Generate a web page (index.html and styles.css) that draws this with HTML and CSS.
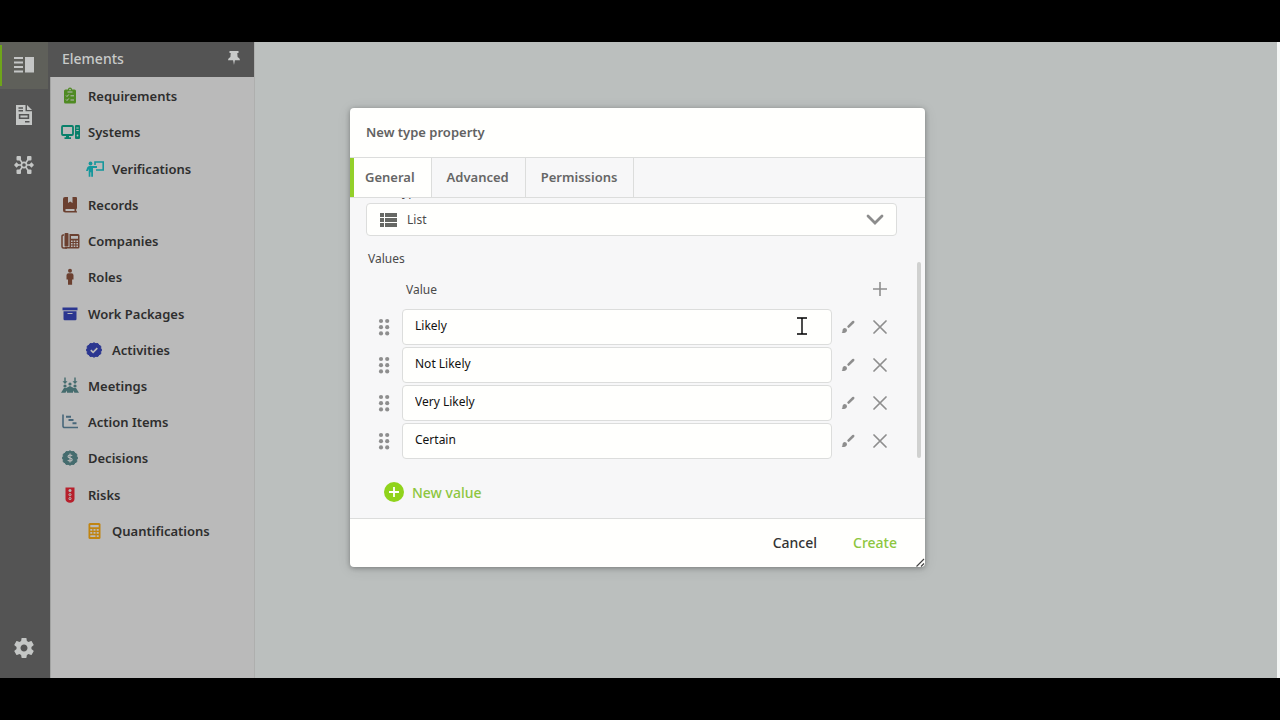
FILE: index.html
```html
<!DOCTYPE html>
<html lang="en">
<head>
    <meta charset="UTF-8">
    <meta name="viewport" content="width=device-width, initial-scale=1.0">
    <title>New type property</title>
    <link rel="stylesheet" href="styles.css">
</head>
<body>
<!-- Shared icons -->
<svg class="icon-defs" aria-hidden="true">
    <symbol id="icon-brush" viewBox="0 0 14 14">
        <path d="M12.2 2 7.500 6.700" stroke="currentColor" stroke-width="2.500" stroke-linecap="round"/>
        <path d="M3.800 8a2.400 2.400 0 0 1 2.200 2.600c-.2 1.600-1.600 2.400-3 2.400C2 13 1.200 12.900.6 12.500c.7-.4.9-1 .9-2C1.600 9 2.400 8 3.800 8z"/>
        <path d="M4.800 6.300 8 9.500" stroke="#f7f7f7" stroke-width=".8"/>
    </symbol>
    <symbol id="icon-close" viewBox="0 0 14 14">
        <path d="M1 1l12 12M13 1L1 13" fill="none" stroke="currentColor" stroke-width="1.700" stroke-linecap="round"/>
    </symbol>
    <symbol id="icon-drag" viewBox="0 0 12 18">
        <circle cx="3" cy="3" r="2.100"/><circle cx="9.200" cy="3" r="2.100"/>
        <circle cx="3" cy="9.200" r="2.100"/><circle cx="9.200" cy="9.200" r="2.100"/>
        <circle cx="3" cy="15.400" r="2.100"/><circle cx="9.200" cy="15.400" r="2.100"/>
    </symbol>
    <symbol id="icon-seal" viewBox="0 0 20 20">
        <path d="M10 2.800l1.900.9 2-.2 1.100 1.700 1.800 1-.1 2 .9 1.800-.9 1.800.1 2-1.800 1-1.100 1.700-2-.2-1.900.9-1.900-.9-2 .2L5 14.800l-1.800-1 .1-2-.9-1.800.9-1.800-.1-2 1.800-1 1.100-1.700 2 .2z" stroke="currentColor" stroke-linejoin="round"/>
    </symbol>
</svg>

<div class="app">
    <nav class="rail" aria-label="Main">
        <button class="rail-item active" aria-label="Elements">
            <svg width="20" height="16" viewBox="0 0 20 16"><path d="M0 0h9v2H0zM0 4.500h9v2H0zM0 9h9v2H0zM0 13.500h9v2H0zM11 0h9v15.500h-9z"/></svg>
        </button>
        <button class="rail-item" aria-label="Documents">
            <svg width="16" height="20" viewBox="0 0 16 20"><path fill-rule="evenodd" d="M0 0h9.500v6.200H16V20H0zM2.500 2.300v1.400H7V2.300zM2.500 5v1.400H7V5zM2.800 9v5h10.400V9zM4.400 10.500h7.200v2H4.400zM9 16v1.400h4.500V16z"/><path d="M11 0l5 5h-5z"/></svg>
        </button>
        <button class="rail-item" aria-label="Relations">
            <svg width="20" height="20" viewBox="0 0 20 20"><path d="M5 3l3.200 5M15 3l-3.200 5M5 17l3.200-5M15 17l-3.200-5M3 10h4M13 10h4" stroke="currentColor" stroke-width="1.500"/><circle cx="10" cy="10" r="2.600" fill="none" stroke="currentColor" stroke-width="1.600"/><rect x="2.500" y="1" width="4.500" height="4.500" rx="1"/><rect x="13" y="1" width="4.500" height="4.500" rx="1"/><rect x="2.500" y="14.500" width="4.500" height="4.500" rx="1"/><rect x="13" y="14.500" width="4.500" height="4.500" rx="1"/><path d="M2.500 7.300 5.200 10l-2.700 2.700L0 10zM17.500 7.300 20 10l-2.500 2.700L14.800 10z"/></svg>
        </button>
        <button class="rail-item rail-settings" aria-label="Settings">
            <svg width="24" height="24" viewBox="0 0 24 24"><path d="M19.430 12.980c.04-.32.070-.64.070-.98s-.03-.66-.07-.98l2.110-1.650c.19-.15.240-.42.120-.64l-2-3.460c-.12-.22-.39-.3-.61-.22l-2.490 1c-.52-.4-1.080-.73-1.690-.98l-.38-2.650C14.460 2.180 14.250 2 14 2h-4c-.25 0-.46.180-.49.420l-.38 2.650c-.61.250-1.170.590-1.690.980l-2.490-1c-.23-.09-.49 0-.61.220l-2 3.460c-.13.220-.07.490.12.640l2.110 1.650c-.04.320-.07.650-.07.980s.03.660.070.980l-2.110 1.650c-.19.150-.24.420-.12.640l2 3.460c.12.220.390.300.610.220l2.490-1c.52.400 1.080.730 1.690.980l.38 2.650c.03.240.240.420.490.420h4c.25 0 .46-.18.490-.42l.38-2.650c.61-.25 1.170-.59 1.690-.98l2.490 1c.23.090.490 0 .610-.22l2-3.460c.12-.22.070-.49-.12-.64l-2.110-1.650zM12 15.500c-1.930 0-3.500-1.570-3.500-3.500s1.570-3.500 3.500-3.500 3.500 1.570 3.500 3.500-1.570 3.500-3.500 3.500z"/></svg>
        </button>
    </nav>

    <aside class="panel">
        <header class="panel-header">
            <h2>Elements</h2>
            <button class="pin" aria-label="Unpin panel">
                <svg width="12" height="14" viewBox="0 0 12 14"><path d="M1.500 0h9v2H9.300l.3 4c1.400.8 2.200 1.800 2.400 3.200H6.900L6 14l-.9-4.800H0C.2 7.800 1 6.800 2.400 6l.3-4H1.500z"/></svg>
            </button>
        </header>
        <div class="panel-content">
            <div class="element-list">
                <a href="#" class="element green">
                    <svg viewBox="0 0 20 20"><path d="M5.500 3.500H8a2 2 0 0 1 4 0h2.500A1.500 1.500 0 0 1 16 5v11a1.500 1.500 0 0 1-1.500 1.500h-9A1.500 1.500 0 0 1 4 16V5a1.500 1.500 0 0 1 1.500-1.500z"/><circle class="cut" cx="10" cy="3.600" r=".8"/><path class="cut-line" d="M7.500 6h5M6 9.500l1 1 1.800-2M10.500 9.800H14M6 13.500l1 1 1.800-2M10.500 14H14"/></svg>
                    Requirements
                </a>
                <a href="#" class="element teal">
                    <svg viewBox="0 0 20 20"><rect x="2" y="4" width="11" height="9" rx="1" fill="none" stroke="currentColor" stroke-width="1.800"/><path d="M6 13h3v3H6zM4.500 15.200h6.500V17H4.500z"/><rect x="15" y="3" width="5" height="14" rx="1"/><path class="cut-line" d="M16.300 6h2.400M16.300 8.500h2.400"/><circle class="cut" cx="17.500" cy="13.500" r=".9"/></svg>
                    Systems
                </a>
                <a href="#" class="element child cyan">
                    <svg viewBox="0 0 20 20"><circle cx="6.500" cy="4.500" r="1.900"/><path d="M5.500 7H13v2H9v8.800H7.200v-4.500h-.8v4.500H4.700V10L3.800 12H2l1.200-3.500Q3.800 7 5.500 7z"/><path d="M11 6V3h8.200v8H12" fill="none" stroke="currentColor" stroke-width="1.600"/></svg>
                    Verifications
                </a>
                <a href="#" class="element brown">
                    <svg viewBox="0 0 20 20"><path fill-rule="evenodd" d="M5 2h3v6l2.200-1.600L12.500 8V2H16a1 1 0 0 1 1 1v10.500l-.8.500v2.200h.8V17.500H5.500A2.500 2.500 0 0 1 3 15V4a2 2 0 0 1 2-2zM5.500 14v2h9v-2z"/></svg>
                    Records
                </a>
                <a href="#" class="element brown">
                    <svg viewBox="0 0 20 20"><path d="M4 4H3.200A1.200 1.200 0 0 0 2 5.200V15.500A1.500 1.500 0 0 0 3.500 17H7" fill="none" stroke="currentColor" stroke-width="1.500"/><rect x="4.500" y="2" width="4" height="13.500" rx="1"/><path d="M9.500 3H18a1.500 1.500 0 0 1 1.500 1.500V16a1.500 1.500 0 0 1-1.500 1.500H5V16h4.500z"/><path class="cut" d="M11 5h7v2.800h-7zM11 9.500h1.600V11H11zM13.700 9.500h1.600V11h-1.600zM16.400 9.500H18V11h-1.600zM11 12h1.600v1.500H11zM13.700 12h1.600v1.500h-1.600zM16.400 12H18v1.500h-1.600zM11 14.500h1.600V16H11zM13.700 14.500h1.600V16h-1.600zM16.400 14.500H18V16h-1.600z"/></svg>
                    Companies
                </a>
                <a href="#" class="element brown">
                    <svg viewBox="0 0 20 20"><circle cx="10" cy="3.700" r="2"/><path d="M8.500 6.200h3a2 2 0 0 1 2 2v4.300h-1.400v5.300H8v-5.300H6.500V8.200a2 2 0 0 1 2-2z"/></svg>
                    Roles
                </a>
                <a href="#" class="element blue">
                    <svg viewBox="0 0 20 20"><path d="M2.500 3.500h15v2.800h-15z"/><path d="M3.500 7.200h13V15a1.200 1.200 0 0 1-1.200 1.200H4.700A1.200 1.200 0 0 1 3.500 15z"/><path class="cut-line" d="M7.500 9.500h5"/></svg>
                    Work Packages
                </a>
                <a href="#" class="element child blue">
                    <svg viewBox="0 0 20 20"><use href="#icon-seal"/><path d="M6.800 10.200l2.300 2.200 4.200-4.300" fill="none" stroke="#bababa" stroke-width="1.600"/></svg>
                    Activities
                </a>
                <a href="#" class="element slate">
                    <svg viewBox="0 0 20 20"><path d="M4.300 1.500h1.400v3.700h1.800L5 8 2.500 5.200h1.800zM14.300 1.500h1.400v3.700h1.800L15 8l-2.500-2.800h1.800z"/><circle cx="5" cy="10" r="1.600"/><circle cx="15" cy="10" r="1.600"/><circle cx="10" cy="8" r="1.600"/><path d="M4 12h2.200L10 10l3.800 2H16l3 4.800h-4.500L13 14.500v2.300H7v-2.300l-1.500 2.300H1z"/></svg>
                    Meetings
                </a>
                <a href="#" class="element steel">
                    <svg viewBox="0 0 20 20"><path d="M3 2.500V14a1.500 1.500 0 0 0 1.500 1.500H18" fill="none" stroke="currentColor" stroke-width="1.600"/><path d="M6 4.700h5M8.500 8h5M12.500 11.300h4" stroke="currentColor" stroke-width="1.900"/></svg>
                    Action Items
                </a>
                <a href="#" class="element slate">
                    <svg viewBox="0 0 20 20"><use href="#icon-seal"/><path d="M12.200 7.800Q11.500 7 10 7 8 7 8 8.500 8 9.700 10 10q2.200.3 2.200 1.700Q12.200 13 10 13q-1.500 0-2.300-.9M10 5.500v9" fill="none" stroke="#bababa" stroke-width="1.100"/></svg>
                    Decisions
                </a>
                <a href="#" class="element red">
                    <svg viewBox="0 0 20 20"><path d="M5.500 2.500h9V14a4.500 3.800 0 0 1-9 0z"/><circle class="cut" cx="10" cy="5.500" r="1.500"/><circle class="cut-line" cx="10" cy="9.700" r="1.100"/><circle class="cut-line" cx="10" cy="13.600" r="1.100"/></svg>
                    Risks
                </a>
                <a href="#" class="element child orange">
                    <svg viewBox="0 0 20 20"><rect x="4.500" y="2" width="12" height="16" rx="1.500"/><path class="cut" d="M6.300 4h8.400v2.300H6.300zM6.300 8h2v1.800h-2zM9.500 8h2v1.800h-2zM12.700 8h2v1.800h-2zM6.300 11h2v1.800h-2zM9.500 11h2v1.800h-2zM12.700 11h2v1.800h-2zM6.300 14.200h5.200V16H6.300zM12.700 14.200h2V16h-2z"/></svg>
                    Quantifications
                </a>
            </div>
        </div>
    </aside>

    <main class="workspace"></main>

    <div class="backdrop">
        <section class="dialog" role="dialog" aria-labelledby="dialog-title">
            <h1 class="dialog-title" id="dialog-title">New type property</h1>
            <div class="tabs" role="tablist">
                <button class="tab active" role="tab" aria-selected="true">General</button>
                <button class="tab" role="tab" aria-selected="false">Advanced</button>
                <button class="tab" role="tab" aria-selected="false">Permissions</button>
            </div>

            <div class="dialog-body">
                <label class="field-label" for="data-type">Data type</label>
                <div class="select-box">
                    <svg class="select-icon" width="17" height="14" viewBox="0 0 17 14"><path d="M0 0h4v4H0zM5 0h12v4H5zM0 5h4v4H0zM5 5h12v4H5zM0 10h4v4H0zM5 10h12v4H5z"/></svg>
                    <select id="data-type">
                        <option>List</option>
                    </select>
                    <svg class="select-arrow" width="18" height="11" viewBox="0 0 18 11"><path d="M2 2l7 7 7-7" fill="none" stroke="currentColor" stroke-width="2.800" stroke-linecap="round"/></svg>
                </div>

                <div class="values-title">Values</div>
                <div class="values-head">
                    <span>Value</span>
                    <button class="icon-button" aria-label="Add value">
                        <svg width="14" height="14" viewBox="0 0 14 14"><path d="M7 0v14M0 7h14" stroke="currentColor" stroke-width="1.600"/></svg>
                    </button>
                </div>
                <div class="value-list">
                    <div class="value-row">
                        <svg class="drag" width="12" height="18"><use href="#icon-drag"/></svg>
                        <input type="text" value="Likely" aria-label="Value 1">
                        <button class="icon-button" aria-label="Colour"><svg width="14" height="14"><use href="#icon-brush"/></svg></button>
                        <button class="icon-button" aria-label="Remove"><svg width="14" height="14"><use href="#icon-close"/></svg></button>
                    </div>
                    <div class="value-row">
                        <svg class="drag" width="12" height="18"><use href="#icon-drag"/></svg>
                        <input type="text" value="Not Likely" aria-label="Value 2">
                        <button class="icon-button" aria-label="Colour"><svg width="14" height="14"><use href="#icon-brush"/></svg></button>
                        <button class="icon-button" aria-label="Remove"><svg width="14" height="14"><use href="#icon-close"/></svg></button>
                    </div>
                    <div class="value-row">
                        <svg class="drag" width="12" height="18"><use href="#icon-drag"/></svg>
                        <input type="text" value="Very Likely" aria-label="Value 3">
                        <button class="icon-button" aria-label="Colour"><svg width="14" height="14"><use href="#icon-brush"/></svg></button>
                        <button class="icon-button" aria-label="Remove"><svg width="14" height="14"><use href="#icon-close"/></svg></button>
                    </div>
                    <div class="value-row">
                        <svg class="drag" width="12" height="18"><use href="#icon-drag"/></svg>
                        <input type="text" value="Certain" aria-label="Value 4">
                        <button class="icon-button" aria-label="Colour"><svg width="14" height="14"><use href="#icon-brush"/></svg></button>
                        <button class="icon-button" aria-label="Remove"><svg width="14" height="14"><use href="#icon-close"/></svg></button>
                    </div>
                </div>
                <button class="new-value">
                    <svg width="20" height="20" viewBox="0 0 20 20"><circle cx="10" cy="10" r="10"/><path d="M10 5v10M5 10h10" stroke="#fff" stroke-width="1.800"/></svg>
                    New value
                </button>
                <div class="scroll-thumb"></div>
            </div>

            <footer class="dialog-footer">
                <button class="text-button">Cancel</button>
                <button class="text-button primary">Create</button>
            </footer>
            <svg class="resize-grip" width="9" height="9" viewBox="0 0 9 9"><path d="M.5 8.500 8 1M5 8.500l3-3" stroke="currentColor" stroke-width="1.200"/></svg>
            <svg class="text-cursor" width="10" height="18" viewBox="0 0 10 18"><path d="M0 1h10M0 17h10M5 1v16" stroke="#000" stroke-width="1.400"/></svg>
        </section>
    </div>
</div>
</body>
</html>
```
FILE: styles.css
```css
* {
    box-sizing: border-box;
}

body {
    margin: 0;
    height: 100vh;
    padding: 42px 0;
    background: #000;
    font-family: "Noto Sans", sans-serif;
    font-size: 13px;
    color: #4a4a4a;
    overflow: hidden;
}

button {
    font: inherit;
    color: inherit;
    background: none;
    border: none;
    padding: 0;
    cursor: pointer;
}

svg {
    display: block;
    flex-shrink: 0;
    fill: currentColor;
}

.icon-defs {
    position: absolute;
    width: 0;
    height: 0;
}

.app {
    position: relative;
    display: flex;
    height: 100%;
    border-right: 3px solid #f4f6f5;
}

/* Left icon rail */
.rail {
    display: flex;
    flex-direction: column;
    gap: 3px;
    width: 50px;
    background: #545454;
    color: #c4c6c5;
}

.rail-item {
    position: relative;
    display: flex;
    align-items: center;
    justify-content: center;
    width: 48px;
    height: 47px;
    padding-bottom: 2px;
}

.rail-item.active {
    background: #5f605a;
}

.rail-item.active::before {
    content: "";
    position: absolute;
    left: 0;
    top: 3px;
    bottom: 3px;
    width: 2px;
    background: #6fa51a;
}

.rail-settings {
    margin-top: auto;
    margin-bottom: 6px;
}

/* Elements panel */
.panel {
    display: flex;
    flex-direction: column;
    width: 205px;
    background: #bababa;
    border-right: 1px solid #aeafae;
}

.panel-header {
    display: flex;
    align-items: center;
    justify-content: space-between;
    height: 35px;
    padding: 0 14px 3px 12px;
    background: #545454;
    color: #c8cac9;
}

.panel-header h2 {
    margin: 0;
    font-size: 14px;
    font-weight: 500;
}

.panel-content {
    flex: 1;
    border-left: 1px solid #a2a3a2;
}

.element-list {
    display: flex;
    flex-direction: column;
    height: 471px;
    margin-top: 1px;
}

.element {
    flex: 1;
    display: flex;
    align-items: center;
    gap: 8px;
    padding-left: 9px;
    font-weight: 600;
    color: #2e2e2e;
    text-decoration: none;
}

.element.child {
    padding-left: 33px;
}

.element svg {
    width: 20px;
    height: 20px;
}

.element .cut {
    fill: #bababa;
}

.element .cut-line {
    fill: none;
    stroke: #bababa;
    stroke-width: 1;
}

.green svg { color: #4f8a22; }
.teal svg { color: #08806a; }
.cyan svg { color: #15979c; }
.brown svg { color: #6b4030; }
.blue svg { color: #2b3690; }
.slate svg { color: #456c6e; }
.steel svg { color: #48677a; }
.red svg { color: #b71f2b; }
.orange svg { color: #c08411; }

.workspace {
    flex: 1;
    background: #bbbfbe;
}

/* Dialog */
.backdrop {
    position: absolute;
    inset: 0;
    display: flex;
    align-items: flex-start;
    justify-content: center;
    padding: 66px 2px 0 0;
}

.dialog {
    position: relative;
    width: 575px;
    background: #fffffd;
    border-radius: 4px;
    box-shadow: 0 1px 5px rgba(0, 0, 0, 0.3), 0 2px 14px rgba(0, 0, 0, 0.1);
}

.dialog-title {
    margin: 0;
    padding: 0 16px;
    font-size: 13px;
    font-weight: 600;
    line-height: 49px;
    color: #626262;
}

.tabs {
    display: flex;
    height: 41px;
    background: #f7f7f8;
    border-top: 1px solid #dcdddc;
    border-bottom: 1px solid #dcdddc;
}

.tab {
    padding: 0 16px 2px 15px;
    font-weight: 600;
    color: #666;
    border-right: 1px solid #dcdddc;
}

.tab.active {
    padding-left: 11px;
    background: #fffffd;
    border-left: 4px solid #94d02a;
}

.dialog-body {
    position: relative;
    display: flex;
    flex-direction: column;
    justify-content: flex-end;
    height: 320px;
    padding: 0 28px 16px 16px;
    font-size: 12px;
    background: #f7f7f8;
    overflow: hidden;
}

.field-label,
.values-title {
    padding-left: 2px;
    line-height: 18px;
}

.field-label {
    margin-bottom: 2px;
}

.select-box {
    position: relative;
    display: flex;
}

.select-box select {
    flex: 1;
    height: 33px;
    padding: 0 40px;
    font: inherit;
    color: #4a4a4a;
    background: #fffffd;
    border: 1px solid #dcdddc;
    border-radius: 4px;
    appearance: none;
}

.select-icon,
.select-arrow {
    position: absolute;
    top: 10px;
    pointer-events: none;
}

.select-icon {
    left: 14px;
    color: #666864;
}

.select-arrow {
    right: 13px;
    top: 11px;
    color: #8c8c8c;
}

.values-title {
    margin-top: 14px;
}

.values-head {
    display: flex;
    align-items: center;
    justify-content: space-between;
    height: 32px;
    margin-top: 5px;
    padding: 0 1px 0 40px;
}

.icon-button {
    display: flex;
    align-items: center;
    justify-content: center;
    width: 32px;
    height: 32px;
    color: #8e8e8e;
}

.value-list {
    display: flex;
    flex-direction: column;
    gap: 2px;
    margin-top: 4px;
}

.value-row {
    display: flex;
    align-items: center;
    padding: 0 1px 0 12px;
}

.drag {
    margin-right: 12px;
    color: #8e8e8e;
}

.value-row input {
    flex: 1;
    min-width: 0;
    height: 36px;
    padding: 0 12px 4px;
    font: inherit;
    color: #111;
    background: #fffffd;
    border: 1px solid #dcdddc;
    border-radius: 4px;
}

.new-value {
    display: flex;
    align-items: center;
    align-self: flex-start;
    gap: 8px;
    height: 20px;
    margin: 23px 0 0 18px;
    font-size: 14px;
    font-weight: 500;
    color: #8dc63f;
}

.new-value svg {
    color: #90d31c;
}

.scroll-thumb {
    position: absolute;
    right: 4px;
    top: 64px;
    width: 4px;
    height: 196px;
    background: #d0d1d0;
    border-radius: 2px;
}

.dialog-footer {
    display: flex;
    align-items: center;
    justify-content: flex-end;
    gap: 36px;
    height: 49px;
    padding: 0 28px 2px;
    border-top: 1px solid #dcdddc;
}

.text-button {
    font-size: 14px;
    font-weight: 500;
    color: #333;
}

.text-button.primary {
    color: #8dc63f;
}

.resize-grip {
    position: absolute;
    right: 0;
    bottom: 0;
    color: #444;
}

.text-cursor {
    position: absolute;
    left: 447px;
    top: 209px;
}
```
